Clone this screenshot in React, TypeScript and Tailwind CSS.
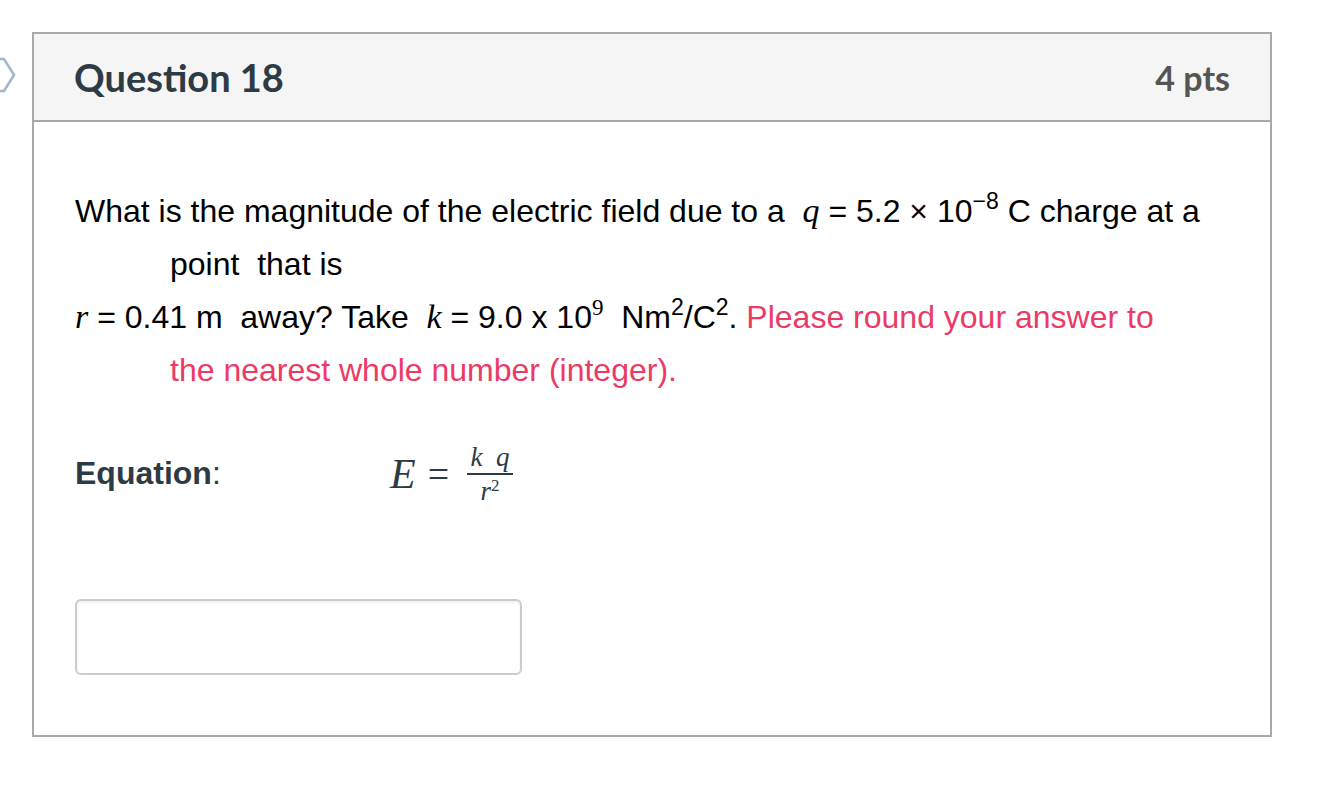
import React from "react";

const PINK = "text-[#ec3a66]";

const Sup = ({ children, serif }: { children: React.ReactNode; serif?: boolean }) => (
  <sup
    className={`relative -top-[13px] align-baseline text-[23px] leading-none ${
      serif ? "font-['Liberation_Serif',serif]" : ""
    }`}
  >
    {children}
  </sup>
);

const MathVar = ({ children }: { children: React.ReactNode }) => (
  <span className="font-['Liberation_Serif',serif] text-[34px] italic leading-none">{children}</span>
);

const Chevron = () => (
  <svg width="32" height="44" viewBox="0 0 32 44" className="mt-[24px]">
    <path
      d="M-6 3 L4 3 L14 19 L4 35 L-6 35"
      fill="none"
      stroke="#a3b6ca"
      strokeWidth="2.5"
      strokeLinejoin="round"
    />
  </svg>
);

const Equation = () => (
  <div className="flex items-center font-['Liberation_Serif',serif] text-[#2d3b45]">
    <span className="text-[42px] italic leading-none">E</span>
    <span className="ml-[12px] mr-[18px] text-[38px] leading-none">=</span>
    <div className="flex flex-col items-center">
      <span className="text-[27px] italic leading-[24px]">
        k&nbsp;&nbsp;q
      </span>
      <div className="my-[4px] h-[1.5px] w-[46px] bg-[#2d3b45]" />
      <span className="text-[27px] italic leading-[24px]">
        r<sup className="text-[17px] not-italic">2</sup>
      </span>
    </div>
  </div>
);

const App = () => {
  return (
    <div className="min-h-screen w-full bg-white pt-[32px]">
      <div className="flex">
        <div className="w-[32px] shrink-0 overflow-hidden">
          <Chevron />
        </div>
        <div className="w-[1240px] border-2 border-[#a9a9a9]">
          <div className="flex h-[88px] items-center justify-between border-b-2 border-[#a9a9a9] bg-[#f5f5f5] pl-[40px] pr-[40px] font-['Lato',sans-serif] font-bold">
            <h2 className="text-[38px] text-[#2d3b45]">Question 18</h2>
            <div className="text-[34px] text-[#555555]">4 pts</div>
          </div>
          <div className="px-[41px] pb-[60px] pt-[63px] font-['Liberation_Sans',Arial,sans-serif] text-[32px] leading-[53px] text-black">
            <p className="pl-[95px] -indent-[95px]">
              What is the magnitude of the electric field due to a&nbsp;&nbsp;<MathVar>q</MathVar> = 5.2 × 10
              <Sup>−8</Sup> C charge at a
              <br />
              point&nbsp;&nbsp;that is
            </p>
            <p className="pl-[95px] -indent-[95px]">
              <MathVar>r</MathVar> = 0.41 m&nbsp;&nbsp;away? Take&nbsp;&nbsp;<MathVar>k</MathVar> = 9.0 x 10
              <Sup serif>9</Sup>&nbsp;&nbsp;Nm<Sup>2</Sup>/C<Sup>2</Sup>.{" "}
              <span className={PINK}>Please round your answer to</span>
              <br />
              <span className={PINK}>the nearest whole number (integer).</span>
            </p>
            <div className="mt-[48px] flex items-center">
              <div className="w-[315px] shrink-0 text-[#2d3b45]">
                <span className="font-bold">Equation</span>:
              </div>
              <Equation />
            </div>
            <div className="mt-[96px] h-[76px] w-[447px] rounded-[6px] border-2 border-[#cccccc] bg-white shadow-[inset_0_2px_3px_rgba(0,0,0,0.06)]" />
          </div>
        </div>
      </div>
    </div>
  );
};

export default App;
